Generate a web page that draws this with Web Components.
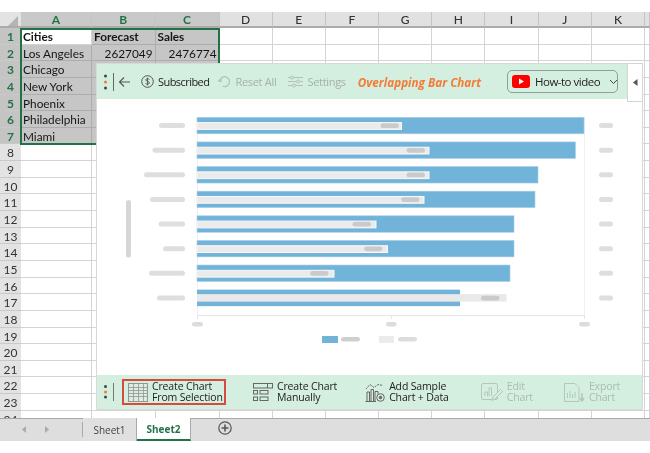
<!DOCTYPE html>
<html lang="en"><head><meta charset="utf-8"><title>Overlapping Bar Chart</title>
<style>html,body{margin:0;padding:0;background:#fff;width:650px;height:453px;overflow:hidden}</style>
</head><body>
<x-workbook>
  <x-sheet></x-sheet>
  <x-panel slot="panel">
    <x-dots slot="top-dots"></x-dots>
    <x-chart slot="chart"></x-chart>
    <x-tool slot="tools" active icon="select" style="margin-left:8px">Create Chart<br>From Selection</x-tool>
    <x-tool slot="tools" icon="manual" style="margin-left:27px">Create Chart<br>Manually</x-tool>
    <x-tool slot="tools" icon="sample" style="margin-left:28px">Add Sample<br>Chart + Data</x-tool>
    <x-tool slot="tools" disabled icon="edit" style="margin-left:32px">Edit<br>Chart</x-tool>
    <x-tool slot="tools" disabled icon="export" style="margin-left:31px">Export<br>Chart</x-tool>
  </x-panel>
  <x-tabs slot="tabs"></x-tabs>
</x-workbook>
<script>
const FONT='"Lato","Open Sans",sans-serif';
class XWorkbook extends HTMLElement{constructor(){super();this.attachShadow({mode:'open'}).innerHTML=`
<style>:host{display:flex;flex-direction:column;width:650px;height:453px;padding-top:12px;box-sizing:border-box;font-family:${FONT};background:#fff;filter:blur(.25px)}
.area{position:relative;height:406px;overflow:hidden;flex:none}
.bottom{flex:none}
::slotted([slot=panel]){position:absolute;left:97px;top:52px}
</style><div class="area"><slot></slot><slot name="panel"></slot></div><div class="bottom"><slot name="tabs"></slot></div>`}}
customElements.define('x-workbook',XWorkbook);

class XSheet extends HTMLElement{constructor(){super();
const cols='ABCDEFGHIJK'.split('');
const data={1:['Cities','Forecast','Sales'],2:['Los Angeles','2627049','2476774'],3:['Chicago'],4:['New York'],5:['Phoenix'],6:['Philadelphia'],7:['Miami']};
let h='<div class="corner"><svg width="21" height="16"><path d="M18 4V14H8Z" fill="#b4b4b4"/></svg></div>';
cols.forEach((c,i)=>h+=`<div class="ch ${i<3?'sel':''}">${c}</div>`);h+='<div class="ch"></div>';
for(let r=1;r<=24;r++){h+=`<div class="rh ${r<=7?'sel':''}">${r}</div>`;
 for(let c=0;c<12;c++){const inSel=r<=7&&c<3;const t=(data[r]&&data[r][c])||'';
  const cl=['c'];if(inSel&&!(r==1&&c==0))cl.push('s');if(r==1&&c<3)cl.push('b');if(r==2&&c>0)cl.push('n');
  h+=`<div class="${cl.join(' ')}">${t}</div>`}}
this.attachShadow({mode:'open'}).innerHTML=`<style>
:host{display:block;position:relative;height:406px;overflow:hidden;font-size:11.8px;color:#151515}
.g{display:grid;grid-template-columns:21px 71px 63.5px 64px repeat(8,53.2px) 1fr;grid-template-rows:16px repeat(24,16.65px)}
.corner{background:#e3e3e3;border-bottom:2px solid #ababab;box-sizing:border-box;height:16px}.corner svg{display:block}
.ch{background:#e1e1e1;border-bottom:2px solid #ababab;border-right:1px solid #c4c4c4;box-sizing:border-box;text-align:center;font-size:12px;line-height:16px;color:#333;font-weight:500}
.ch.sel{background:#c9c9c9;color:#217346;font-weight:700}
.rh{background:#e3e3e3;border-bottom:1px solid #c9c9c9;box-sizing:border-box;text-align:center;line-height:18px;font-size:12px;color:#333}
.rh.sel{background:#c4c4c4;color:#217346;font-weight:700}
.c{border-right:1px solid #d4d4d4;border-bottom:1px solid #d4d4d4;box-sizing:border-box;padding:0 2px;line-height:18px;white-space:nowrap;overflow:hidden;background:#fff}
.s{background:#c6c6c6;border-color:#adadad}.b{font-weight:700}.n{text-align:right}
.box{position:absolute;left:20px;top:15.5px;width:199.5px;height:117px;border:2px solid #217346;box-sizing:border-box;pointer-events:none}
</style><div class="g">${h}</div><div class="box"></div>`}}
customElements.define('x-sheet',XSheet);

class XDots extends HTMLElement{constructor(){super();this.attachShadow({mode:'open'}).innerHTML=`<style>:host{display:block;width:5px}svg{display:block}</style>
<svg width="5" height="18" viewBox="0 0 5 18"><circle cx="2.500" cy="3" r="1.500" fill="#444"/><circle cx="2.500" cy="9" r="1.500" fill="#f47a2c"/><circle cx="2.500" cy="15" r="1.500" fill="#444"/></svg>`}}
customElements.define('x-dots',XDots);

class XPanel extends HTMLElement{constructor(){super();this.attachShadow({mode:'open'}).innerHTML=`<style>
:host{display:flex;flex-direction:column;width:545px;height:345px;background:#fff;box-shadow:0 0 0 1px #d9d9d9;color:#222;font-family:"Open Sans",sans-serif;font-size:11px}
.top{position:relative;height:35px;width:531px;flex:none;background:#d4eee0;display:flex;align-items:center;box-sizing:border-box;padding-left:6px}
.sep{width:1px;height:18px;background:#666;margin-left:5px}
.item{display:flex;align-items:center;white-space:nowrap}
.dis{color:#a4b2aa}
.title{color:#f47b36;font-weight:700;font-style:italic;font-size:11.7px;font-family:"Open Sans",sans-serif;white-space:nowrap}
.video{display:flex;align-items:center;flex:none;width:111px;height:23px;box-sizing:border-box;border:1.5px solid #8f9f96;border-radius:5px;padding-left:4px;margin-left:26px;font-size:11.5px;color:#222;white-space:nowrap}
.tab{position:absolute;left:531px;top:0;width:14px;height:37px;background:#fff;box-shadow:0 0 0 1px #d4d4d4;display:flex;align-items:center;justify-content:center}
.body{flex:1;min-height:0}
.bot{height:34px;flex:none;background:#d4eee0;display:flex;align-items:center;box-sizing:border-box;padding-left:6px}
svg{display:block;flex:none}
</style>
<div class="top"><slot name="top-dots"></slot><div class="sep"></div>
<svg style="margin-left:4px" width="13" height="12" viewBox="0 0 13 12"><path d="M12 6H1.500M6 1.500L1.500 6L6 10.500" fill="none" stroke="#555" stroke-width="1.100"/></svg>
<div class="item" style="margin-left:10px"><svg width="13" height="13" viewBox="0 0 13 13"><circle cx="6.500" cy="6.500" r="5.800" fill="none" stroke="#555" stroke-width="1"/><path d="M8.500 4.500C8 3.600 5 3.200 4.700 4.800C4.500 6.500 8.600 6 8.400 8C8.100 9.700 5 9.500 4.400 8.300M6.500 2.700V10.300" fill="none" stroke="#555" stroke-width=".9"/></svg><span style="margin-left:4px;letter-spacing:-.55px">Subscribed</span></div>
<div class="item dis" style="margin-left:8px"><svg width="15" height="13" viewBox="0 0 15 13"><path d="M4 3.500A4.800 4.800 0 1 1 5.500 11" fill="none" stroke="#b3c2b9" stroke-width="1.200"/><path d="M.5 6L4.500 2.500V7.500Z" fill="#b3c2b9"/></svg><span style="margin-left:3px;letter-spacing:-.3px">Reset All</span></div>
<div class="item dis" style="margin-left:12px"><svg width="15" height="13" viewBox="0 0 15 13"><path d="M0 2.500H15M0 6.500H15M0 10.500H15" stroke="#b3c2b9" stroke-width="1"/><circle cx="4" cy="2.500" r="1.500" fill="#d4eee0" stroke="#b3c2b9"/><circle cx="10" cy="6.500" r="1.500" fill="#d4eee0" stroke="#b3c2b9"/><circle cx="6" cy="10.500" r="1.500" fill="#d4eee0" stroke="#b3c2b9"/></svg><span style="margin-left:4px;letter-spacing:-.3px">Settings</span></div>
<span class="title" style="margin-left:12px">Overlapping Bar Chart</span>
<div class="video"><svg width="18" height="13" viewBox="0 0 18 13"><rect width="18" height="13" rx="3" fill="#f00"/><path d="M7 3.500L12 6.500L7 9.500Z" fill="#fff"/></svg><span style="margin-left:5px;letter-spacing:-.5px">How-to video</span><svg style="margin-left:9px" width="9" height="6" viewBox="0 0 9 6"><path d="M1 1L4.500 4.500L8 1" fill="none" stroke="#444" stroke-width="1"/></svg></div>
<div class="tab"><svg width="5" height="7" viewBox="0 0 5 7"><path d="M4.500 0V7L0 3.500Z" fill="#555"/></svg></div></div>
<div class="body"><slot name="chart"></slot></div>
<div class="bot"><svg width="5" height="18" viewBox="0 0 5 18"><circle cx="2.500" cy="3.500" r="1.500" fill="#444"/><circle cx="2.500" cy="9" r="1.500" fill="#f47a2c"/><circle cx="2.500" cy="14" r="1.500" fill="#444"/></svg><div class="sep" style="background:#777"></div><slot name="tools"></slot></div>`}}
customElements.define('x-panel',XPanel);

const ICONS={
select:`<svg width="20" height="19" viewBox="0 0 20 19" fill="none" stroke="#8c9a91"><rect x=".5" y=".5" width="19" height="18" fill="#e0e9e3"/><path d="M.5 4.500H19.500M.5 7.500H19.500M.5 10.500H19.500M.5 13.500H19.500M5.500.5V18.500M10.500.5V18.500M15.500.5V18.500" stroke-width=".8"/></svg>`,
manual:`<svg width="20" height="19" viewBox="0 0 20 19" fill="none" stroke="#666" stroke-width="1"><rect x=".5" y=".5" width="19" height="4.500"/><path d="M14.500.5V5" /><rect x=".5" y="7.500" width="4" height="3.500"/><rect x="7" y="7.500" width="8" height="3.500"/><rect x=".5" y="14" width="4" height="3.500"/><rect x="7" y="14" width="8" height="3.500"/></svg>`,
sample:`<svg width="20" height="20" viewBox="0 0 20 20" fill="none" stroke="#666" stroke-width="1"><path d="M1 7L5 2.500L9 5.500L13 2.500L18 3.500" stroke-dasharray="2 1"/><path d="M2 19V10H4.500V19M6 19V7.500H8.500V19M10 19V9.500H13V12M.5 19.500H11"/><circle cx="15.500" cy="15.500" r="3.800" fill="#d4eee0"/><circle cx="15.500" cy="15.500" r="1.300" fill="#666"/></svg>`,
edit:`<svg width="22" height="19" viewBox="0 0 22 19" fill="none" stroke="#b3c7bb" stroke-width="1"><rect x=".5" y=".5" width="16" height="16" rx="1.500"/><path d="M4 13V9H6.500V13M8 13V5H10.500V13"/><path d="M11 17.500L12 14L19.500 6.500L21.500 8.500L14 16Z" fill="#d4eee0"/></svg>`,
export:`<svg width="21" height="19" viewBox="0 0 21 19" fill="none" stroke="#b3c7bb" stroke-width="1"><path d="M.5 .5H11L15 4.500V18.500H.5Z"/><path d="M3.500 15V10M6 15V8M8.500 15V11M11 15V9"/><path d="M18 10V17M16 15L18 18L20 15" stroke-width="1.500"/></svg>`};
class XTool extends HTMLElement{constructor(){super();this.attachShadow({mode:'open'}).innerHTML=`<style>
:host{display:flex;align-items:center;flex:none;height:26px;box-sizing:border-box;font-family:"Open Sans",sans-serif;font-size:10.5px;line-height:11px;color:#222;white-space:nowrap;letter-spacing:-.15px}
:host([active]){border:2px solid #d8493f;padding:0 0 0 4px;width:104px}
:host([disabled]){color:#a9bcb1}
.i{margin-right:4px;display:flex}svg{display:block}
</style><span class="i" id="i"></span><span><slot></slot></span>`}
connectedCallback(){this.shadowRoot.getElementById('i').innerHTML=ICONS[this.getAttribute('icon')]||''}}
customElements.define('x-tool',XTool);

class XChart extends HTMLElement{constructor(){super();
const G=[[584,401.500,380.500,159],[575.500,429,406.500,152.500],[538,429,406.500,144],[535,424,401,150],[514,376,352.500,158.500],[514,387.500,364,163],[510,334,310,149],[460,506.500,481,157]];
const pill=(x,y,w,h,f)=>`<rect x="${x}" y="${y}" width="${w}" height="${h}" rx="2.500" fill="${f}"/>`;
let s=`<path d="M584.500 117V315M197.500 117V315" stroke="#f0f0f0"/><path d="M197 315.500H585M197.500 315V319M391.500 315V319M584.500 315V319" stroke="#e6e6e6"/>`;
G.forEach((g,i)=>{const y=117.300+i*24.620,c=y+8.300;
 if(i<7){s+=`<rect x="197" y="${y}" width="${g[0]-197}" height="16.500" fill="#72b3da" stroke="#a8d0ea" stroke-width=".6"/>`;
  s+=`<rect x="197" y="${y+5.300}" width="${g[1]-197}" height="6.800" fill="#ebebeb" stroke="#f8f8f8"/>`;}
 else{s+=`<rect x="197" y="${y}" width="${g[0]-197}" height="16.500" fill="#72b3da"/><rect x="197" y="${y+4.500}" width="${g[1]-197}" height="7.500" fill="#e9e9e9"/>`;}
 s+=pill(g[2],c-2.300,18.500,4.800,'#cacaca');
 s+=pill(g[3],c-2.500,185-g[3],5,'#dedede');
 s+=pill(599,c-2.500,14,5,'#dedede');
});
s+=pill(126,200,5,57.500,'#d6d6d6');
s+=pill(192,322,11,4.500,'#dcdcdc')+pill(386,322,10.500,4.500,'#dcdcdc')+pill(579,322,11,4.500,'#dcdcdc');
s+=`<rect x="322" y="336" width="16" height="7" fill="#72b3da"/>`+pill(341,337,19,4.500,'#cfcfcf');
s+=`<rect x="379" y="336" width="15" height="7" fill="#ebebeb"/>`+pill(398,337,19,4.500,'#dcdcdc');
this.attachShadow({mode:'open'}).innerHTML=`<style>:host{display:block;height:276px}svg{display:block;filter:blur(.2px)}</style><svg width="545" height="276" viewBox="97 99 545 276">${s}</svg>`}}
customElements.define('x-chart',XChart);

class XTabs extends HTMLElement{constructor(){super();this.attachShadow({mode:'open'}).innerHTML=`<style>
:host{display:flex;align-items:stretch;height:23px;background:#dedede;border-top:1.500px solid #a8a8a8;box-sizing:border-box;font-family:"Open Sans",sans-serif;font-size:10px;color:#444}
.arrows{width:83px;display:flex;align-items:center;padding-left:22px;box-sizing:border-box;gap:19px;border-right:1px solid #aaa;margin:3px 0 4px}
.t{display:flex;align-items:center;justify-content:center;box-sizing:border-box;border-right:1px solid #aaa;height:23px;margin-top:-1.500px;padding-top:1px;background:#e0e0e0}
.a{width:54px;background:#fff;color:#217346;font-weight:700;border-right:1px solid #aaa;border-bottom:2px solid #217346}
.one{width:54px}
svg{display:block}
</style><div class="arrows"><svg width="4" height="7"><path d="M4 0V7L0 3.500Z" fill="#aaa"/></svg><svg width="4" height="7"><path d="M0 0V7L4 3.500Z" fill="#aaa"/></svg></div>
<div class="t one">Sheet1</div><div class="t a">Sheet2</div>
<svg style="margin:2px 0 0 27px" width="14" height="14" viewBox="0 0 14 14"><circle cx="7" cy="7" r="6.200" fill="none" stroke="#555" stroke-width="1.200"/><path d="M3.500 7H10.500M7 3.500V10.500" stroke="#555" stroke-width="1.600"/></svg>`}}
customElements.define('x-tabs',XTabs);
</script>
</body></html>
